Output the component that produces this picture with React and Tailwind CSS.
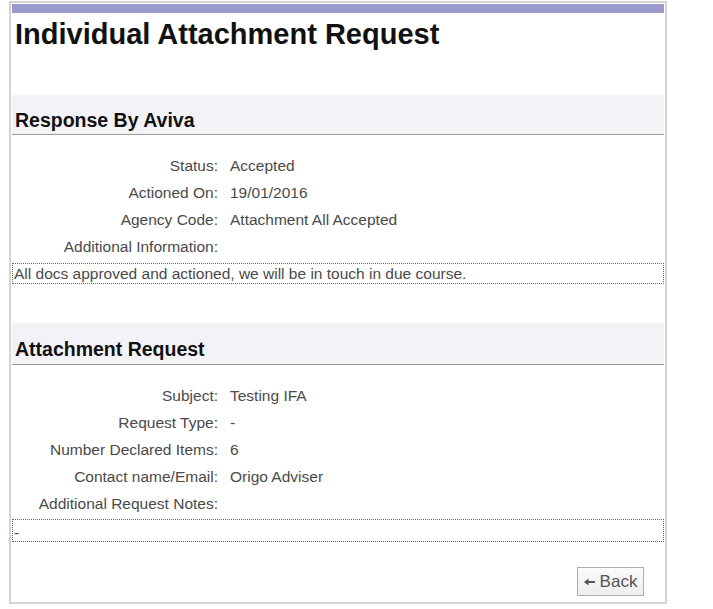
import React from 'react';

const response = [
  ['Status:', 'Accepted'],
  ['Actioned On:', '19/01/2016'],
  ['Agency Code:', 'Attachment All Accepted'],
  ['Additional Information:', ''],
];

const request = [
  ['Subject:', 'Testing IFA'],
  ['Request Type:', '-'],
  ['Number Declared Items:', '6'],
  ['Contact name/Email:', 'Origo Adviser'],
  ['Additional Request Notes:', ''],
];

const SectionHeader = ({ title, className }) => (
  <div className={`bg-[#f3f3f7] border-b border-[#9c9c9c] pl-[3px] ${className}`}>
    <h2 className="text-[19.5px] leading-[20px] font-bold text-[#111]">{title}</h2>
  </div>
);

const DetailRows = ({ rows }) => (
  <div className="grid grid-cols-[206px_1fr] gap-x-[12px] mt-[17px]">
    {rows.map(([label, value]) => (
      <React.Fragment key={label}>
        <div className="text-right leading-[27px]">{label}</div>
        <div className="leading-[27px]">{value}</div>
      </React.Fragment>
    ))}
  </div>
);

const NoteBox = ({ text, className }) => (
  <div className={`border border-dotted border-[#666] leading-[19px] pl-px ${className}`}>{text}</div>
);

const App = () => {
  return (
    <div
      className="min-h-screen bg-white pt-[1px] pl-[9px] text-[15.5px] text-[#4a4a4a]"
      style={{ fontFamily: '"Liberation Sans", Arial, sans-serif' }}
    >
      <div className="w-[658px] h-[603px] border-2 border-[#d4d4d4] px-px pt-px flex flex-col">
        <div className="h-[9px] bg-[#9b9bcb]" />

        <h1 className="mt-[5px] mb-[45px] pl-[3px] text-[29px] leading-[32px] font-bold text-[#111]">
          Individual Attachment Request
        </h1>

        <SectionHeader title="Response By Aviva" className="h-[40px] pt-[15px]" />
        <DetailRows rows={response} />
        <NoteBox
          className="mt-[3px] h-[21px]"
          text="All docs approved and actioned, we will be in touch in due course."
        />

        <SectionHeader title="Attachment Request" className="mt-[39px] h-[42px] pt-[16px]" />
        <DetailRows rows={request} />
        <NoteBox className="mt-[2px] h-[23px] pt-[3px]" text="-" />

        <div className="flex justify-end mt-[25px] pr-[20px]">
          <button className="w-[67px] h-[29px] border border-[#adadad] bg-gradient-to-b from-[#fbfbfb] to-[#ededed] text-[#555] text-[17px] leading-none flex items-center justify-center gap-[5px]">
            <svg width="11" height="8" viewBox="0 0 11 8" className="mt-px">
              <path d="M0 4 L4.5 0.5 L4.5 3 L11 3 L11 5 L4.5 5 L4.5 7.5 Z" fill="#555" />
            </svg>
            <span>Back</span>
          </button>
        </div>
      </div>
    </div>
  );
};

export default App;
